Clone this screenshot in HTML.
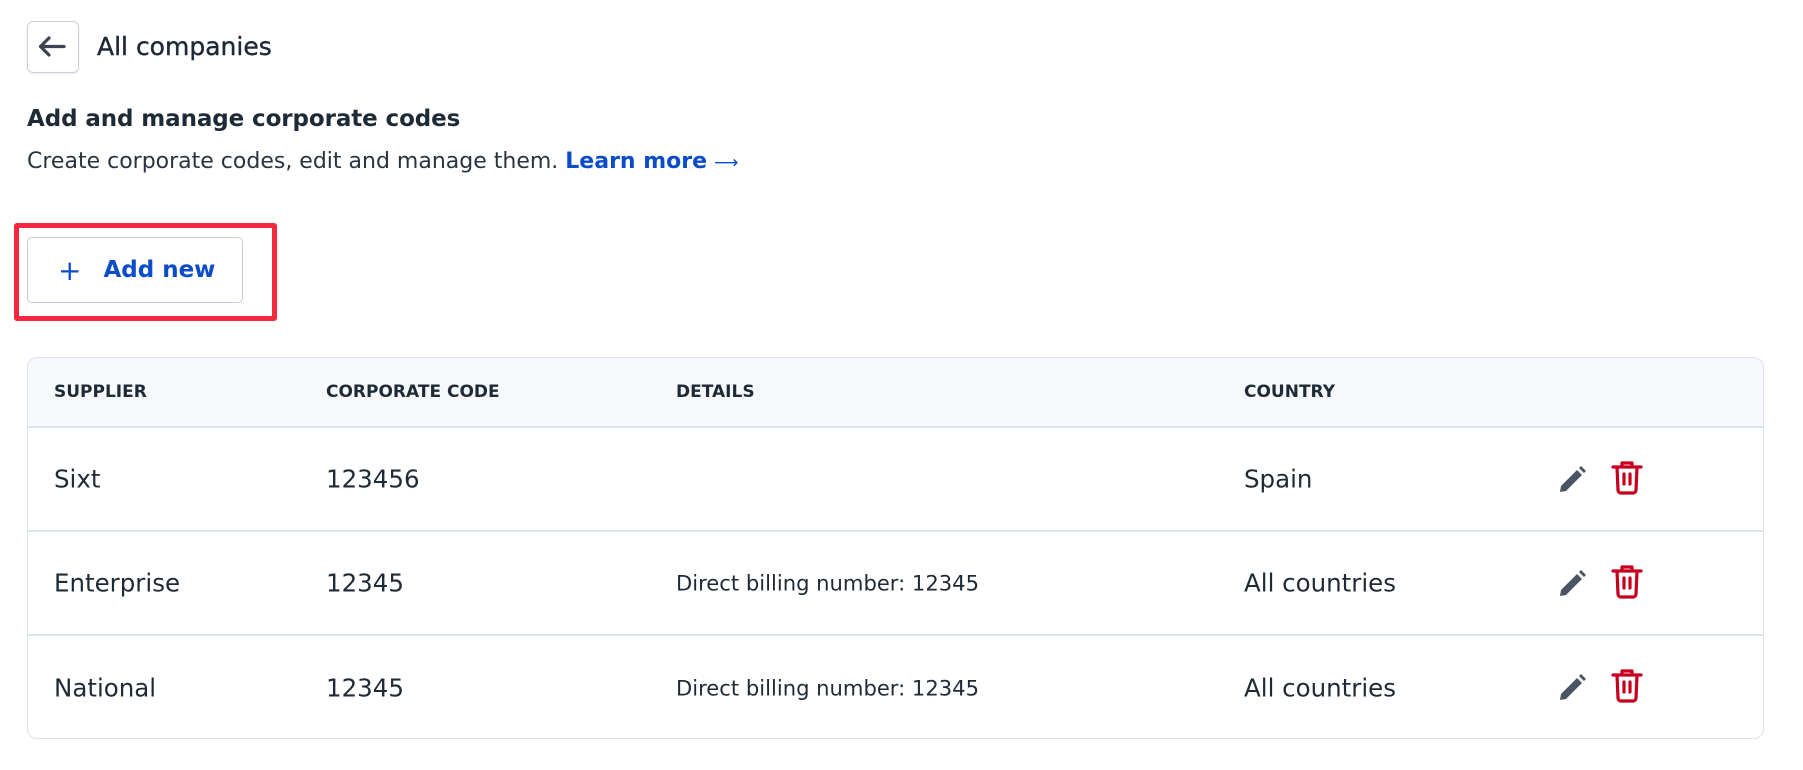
<!DOCTYPE html>
<html><head><meta charset="utf-8"><style>
*{box-sizing:border-box;margin:0;padding:0}
body{width:1803px;height:770px;background:#fff;font-family:"DejaVu Sans","Liberation Sans",sans-serif;color:#1e2937;position:relative;overflow:hidden}
.abs{position:absolute}
.back{left:27px;top:21px;width:52px;height:52px;border:1.5px solid #c9d2dc;border-radius:6px;box-shadow:0 1px 2px rgba(0,0,0,.08)}
.title{left:97px;top:32px;font-size:25px;color:#1e2937;-webkit-text-stroke:.4px #1e2937}
.h{left:27px;top:106px;font-size:23px;font-weight:700;color:#1f2a37;letter-spacing:-.1px}
.sub{left:27px;top:149px;font-size:22px;color:#2a3441}
.sub b{color:#0b4cc9}
.red{left:14px;top:223px;width:263px;height:98px;border:5px solid #f5283e;border-radius:3px}
.btn{left:27px;top:237px;width:216px;height:66px;border:1.5px solid #c3ccd6;border-radius:5px;color:#0b4cc9;font-size:23px;font-weight:700;display:flex;align-items:center;padding-left:30px}
.tbl{left:27px;top:357px;width:1737px;height:382px;border:1.5px solid #dde3ea;border-radius:10px;overflow:hidden}
.hd{position:absolute;left:0;top:0;width:100%;height:70px;background:#f6f8fb;border-bottom:2px solid #dde3ea}
.row{position:absolute;left:0;width:100%;height:104px;border-bottom:2px solid #dde3ea}
.c{position:absolute;top:50%;transform:translateY(-50%);white-space:nowrap}
.hd .c{font-size:17px;font-weight:700;color:#1f2a37}
.row .c{font-size:24.5px;color:#1f2a37}
.row .d{font-size:21.1px}
</style></head><body>
<div class="abs back"><svg width="49" height="49" viewBox="0 0 49 49"><path d="M13 24.5h23M21 16l-8.5 8.5L21 33" fill="none" stroke="#3b4552" stroke-width="3.2" stroke-linecap="round" stroke-linejoin="round"/></svg></div>
<div class="abs title">All companies</div>
<div class="abs h">Add and manage corporate codes</div>
<div class="abs sub">Create corporate codes, edit and manage them. <b>Learn more</b> <span style="color:#0b4cc9;font-size:17px">⟶</span></div>
<div class="abs red"></div>
<div class="abs btn"><span style="font-size:28px;margin-right:22px;font-weight:400">+</span>Add new</div>
<div class="abs tbl">
<div class="hd"><span class="c" style="left:26px">SUPPLIER</span><span class="c" style="left:298px">CORPORATE CODE</span><span class="c" style="left:648px">DETAILS</span><span class="c" style="left:1216px">COUNTRY</span></div>
<div class="row" style="top:70px"><span class="c" style="left:26px">Sixt</span><span class="c" style="left:298px">123456</span><span class="c" style="left:1216px">Spain</span></div>
<div class="row" style="top:174px"><span class="c" style="left:26px">Enterprise</span><span class="c" style="left:298px">12345</span><span class="c d" style="left:648px">Direct billing number: 12345</span><span class="c" style="left:1216px">All countries</span></div>
<div class="row" style="top:278px;border-bottom:none"><span class="c" style="left:26px">National</span><span class="c" style="left:298px">12345</span><span class="c d" style="left:648px">Direct billing number: 12345</span><span class="c" style="left:1216px">All countries</span></div>
</div>
<svg class="abs" style="left:1552px;top:460px" width="40" height="40" viewBox="0 0 40 40"><path d="M8 32l1-6L25 10l5 5-16 16z" fill="#4a5361"/><path d="M27 8l2-2 5 5-2 2z" fill="#4a5361"/></svg>
<svg class="abs" style="left:1610px;top:458px" width="34" height="40" viewBox="0 0 34 40"><path d="M3 9h28M12 9V5h10v4M7 9l1 23a3 3 0 003 3h12a3 3 0 003-3l1-23M14 16v10M20 16v10" fill="none" stroke="#c8001e" stroke-width="3.2" stroke-linecap="round" stroke-linejoin="round"/></svg>
<svg class="abs" style="left:1552px;top:564px" width="40" height="40" viewBox="0 0 40 40"><path d="M8 32l1-6L25 10l5 5-16 16z" fill="#4a5361"/><path d="M27 8l2-2 5 5-2 2z" fill="#4a5361"/></svg>
<svg class="abs" style="left:1610px;top:562px" width="34" height="40" viewBox="0 0 34 40"><path d="M3 9h28M12 9V5h10v4M7 9l1 23a3 3 0 003 3h12a3 3 0 003-3l1-23M14 16v10M20 16v10" fill="none" stroke="#c8001e" stroke-width="3.2" stroke-linecap="round" stroke-linejoin="round"/></svg>
<svg class="abs" style="left:1552px;top:668px" width="40" height="40" viewBox="0 0 40 40"><path d="M8 32l1-6L25 10l5 5-16 16z" fill="#4a5361"/><path d="M27 8l2-2 5 5-2 2z" fill="#4a5361"/></svg>
<svg class="abs" style="left:1610px;top:666px" width="34" height="40" viewBox="0 0 34 40"><path d="M3 9h28M12 9V5h10v4M7 9l1 23a3 3 0 003 3h12a3 3 0 003-3l1-23M14 16v10M20 16v10" fill="none" stroke="#c8001e" stroke-width="3.2" stroke-linecap="round" stroke-linejoin="round"/></svg>
</body></html>
